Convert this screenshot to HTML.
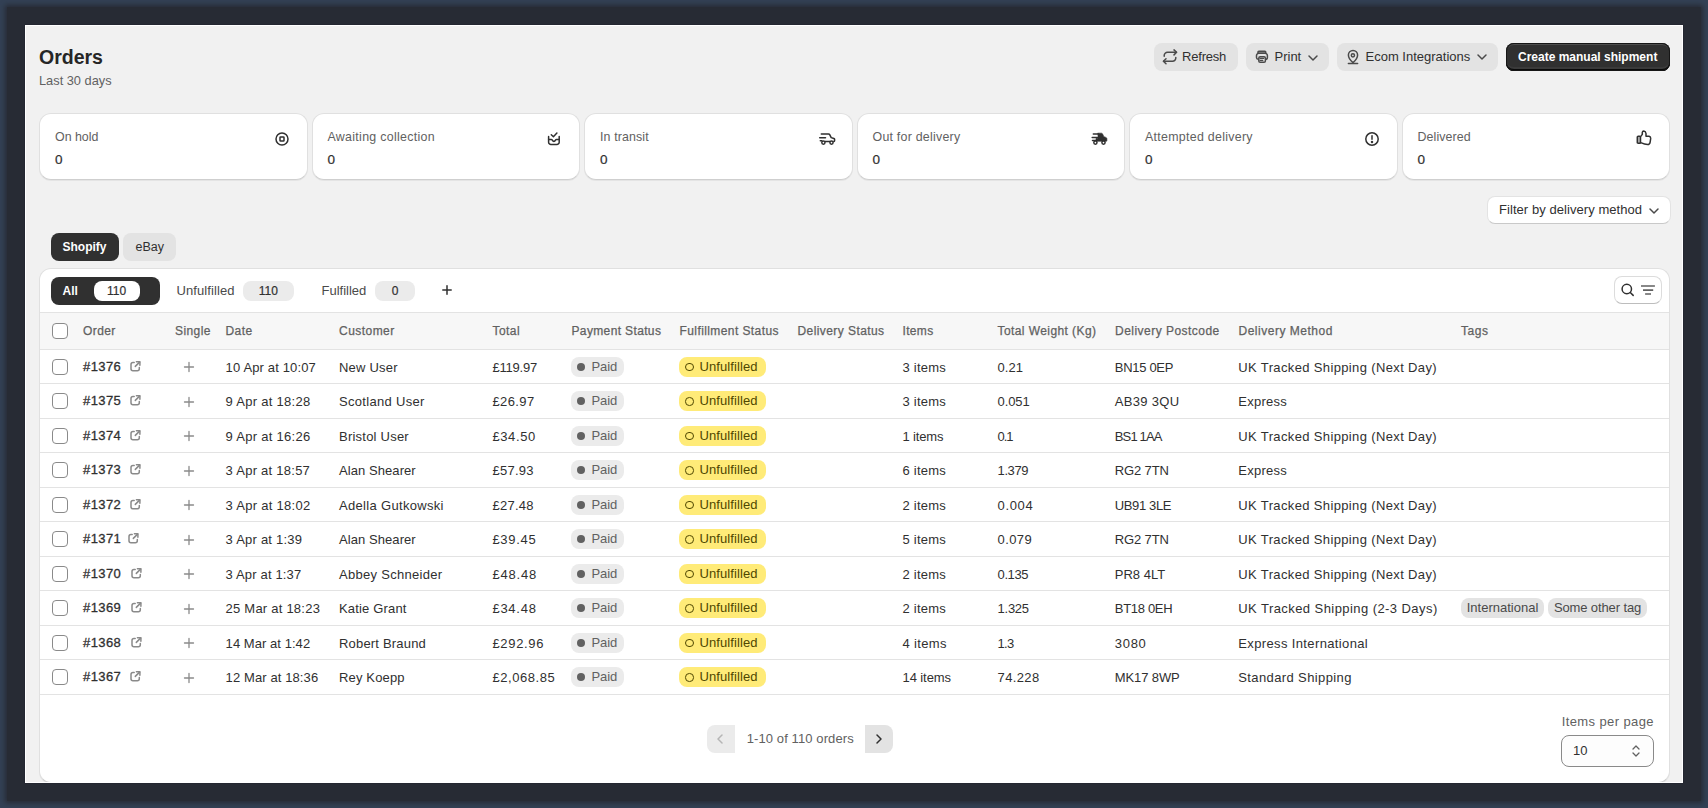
<!DOCTYPE html>
<html><head><meta charset="utf-8">
<style>
*{box-sizing:border-box;margin:0;padding:0}
html,body{width:1708px;height:808px;overflow:hidden}
body{background:#334155;font-family:"Liberation Sans",sans-serif;color:#303030;position:relative}
.frame{position:absolute;left:7px;top:7px;right:7px;bottom:7px;background:#272b34;box-shadow:0 0 5px 2px #272b34}
.panel{position:absolute;left:25px;top:25px;width:1658px;height:758px;background:#f1f1f1;border:1px solid #fff;overflow:hidden;box-shadow:0 0 1px 0 #1a1d24}
.abs{position:absolute;white-space:nowrap}
svg{display:block;overflow:visible}
.title{left:13px;top:19px;font-size:19.5px;font-weight:bold;color:#262626;line-height:24px}
.sub{left:13px;top:47px;font-size:12.8px;color:#616161;line-height:16px}
.btn{position:absolute;top:17px;height:28px;border-radius:8px;background:#e3e3e3;font-size:13px;color:#303030;white-space:nowrap}
.btn .t{position:absolute;top:7px;line-height:14px}
.btn svg{position:absolute}
.primary{background:#303030;color:#fff;font-weight:bold;font-size:12px;box-shadow:inset 0 0 0 1px #161616,inset 0 -2px 0 0 #0a0a0a,inset 0 2px 0 0 #4d4d4d,inset 0 -4px 0 0 #3a3a3a}
.card{position:absolute;background:#fff;border-radius:12px;border:1px solid #e0e0e0;border-bottom-color:#cfcfcf;box-shadow:0 1px 0 0 rgba(0,0,0,.05)}
.stat{top:87px;height:67px;width:268.5px}
.stat .lbl{position:absolute;left:15px;top:15px;font-size:12.4px;color:#616161;line-height:16px;white-space:nowrap}
.stat .val{position:absolute;left:15px;top:37.5px;font-size:13.5px;color:#303030;line-height:16px;letter-spacing:.3px;-webkit-text-stroke:.2px #303030}
.stat svg{position:absolute}
.tab{position:absolute;top:207px;height:28px;border-radius:8px;font-size:12px;line-height:14px}
.tab .t{position:absolute;top:7px}
.tcard{left:13px;top:242px;width:1631px;height:515px;border-radius:12px}
.pill{position:absolute;border-radius:8px}
.cnt{position:absolute;height:20px;border-radius:8px;background:#ebebeb;font-size:12px;line-height:20px;text-align:center;color:#303030;-webkit-text-stroke:.2px #303030}
.hdr{position:absolute;left:0;top:43px;width:1629px;height:38px;background:#f7f7f7;border-top:1px solid #e3e3e3;border-bottom:1px solid #e3e3e3}
.hdr .h{position:absolute;top:11px;font-size:12px;line-height:14px;color:#616161;letter-spacing:.42px;-webkit-text-stroke:.25px #616161;white-space:nowrap}
.line{position:absolute;left:0;width:1629px;height:1px;background:#e3e3e3}
.row{position:absolute;left:0;width:1629px;height:34px}
.c{position:absolute;font-size:13px;line-height:15px;color:#303030;letter-spacing:.3px;white-space:nowrap}
.num{letter-spacing:.15px}
.ord{font-weight:normal;letter-spacing:.42px;-webkit-text-stroke:.3px #303030}
.cb{position:absolute;left:13px;width:16px;height:16px;border:1px solid #8a8a8a;border-radius:4px;background:#fff}
.badge{position:absolute;height:20px;border-radius:8px;font-size:13px;line-height:20px;white-space:nowrap}
.paid{left:532px;width:53px;background:#ebebeb;color:#616161}
.paid i{position:absolute;left:6px;top:6px;width:8px;height:8px;border-radius:50%;background:#616161}
.paid span{position:absolute;left:20.5px;letter-spacing:-.1px}
.unf{left:640px;width:87px;background:#ffeb78;color:#4f4700}
.unf i{position:absolute;left:6px;top:6px;width:8.5px;height:8.5px;border-radius:50%;border:1.5px solid #4f4700}
.unf span{position:absolute;left:20.5px;letter-spacing:.1px}
.tag{position:absolute;height:20px;border-radius:8px;background:#e3e3e3;font-size:13px;line-height:20px;color:#4a4a4a;text-align:center;white-space:nowrap}
</style></head>
<body>
<div class="frame"></div>
<div class="panel">
  <div class="abs title">Orders</div>
  <div class="abs sub">Last 30 days</div>

  <div class="btn" style="left:1128px;width:84px">
    <svg style="left:8px;top:6px" width="16" height="16" viewBox="0 0 16 16" fill="none" stroke="#4a4a4a" stroke-width="1.5" stroke-linecap="round" stroke-linejoin="round">
      <path d="M12 0.9L14.6 3.3L12 5.9"/><path d="M14.4 3.3H5.6A3.3 3.3 0 0 0 2.2 6.6V7.3"/><path d="M4 9.8L1.4 12.3L4 14.8"/><path d="M1.6 12.3H10.4A3.3 3.3 0 0 0 13.8 9V8.5"/>
    </svg>
    <span class="t" style="left:28px;letter-spacing:-.2px">Refresh</span>
  </div>
  <div class="btn" style="left:1220px;width:83px">
    <svg style="left:4px;top:2px" width="24" height="24" viewBox="0 0 24 24" fill="none" stroke="#4a4a4a" stroke-width="1.5" stroke-linejoin="round" stroke-linecap="round"><rect x="7.9" y="6.2" width="7.9" height="2" rx="1"/><path d="M8.3 14.3H8.2A1.8 1.8 0 0 1 6.5 12.5V10.5A2.2 2.2 0 0 1 8.7 8.3H15.2A2.2 2.2 0 0 1 17.4 10.5V12.5A1.8 1.8 0 0 1 15.6 14.3H15.4"/><rect x="8.8" y="11.8" width="6.6" height="5.5" rx="1.4" fill="#e3e3e3"/><path d="M10.1 13.4H13.7M10 15.3H12.8" stroke-width="1.2"/></svg>
    <span class="t" style="left:28.5px">Print</span>
    <svg style="left:62px;top:11.5px" width="10" height="6" viewBox="0 0 10 6" fill="none" stroke="#4a4a4a" stroke-width="1.5" stroke-linecap="round" stroke-linejoin="round"><path d="M1 1l4 4 4-4"/></svg>
  </div>
  <div class="btn" style="left:1311px;width:161px">
    <svg style="left:4px;top:2px" width="24" height="24" viewBox="0 0 24 24" fill="none" stroke="#4a4a4a" stroke-width="1.5" stroke-linejoin="round" stroke-linecap="round"><path d="M12 17.6C12 17.6 7.4 13.8 7.4 10.1A4.6 4.6 0 0 1 16.6 10.1C16.6 13.8 12 17.6 12 17.6Z"/><circle cx="11.9" cy="10.3" r="1.6"/><path d="M7.4 18.6H16.6"/></svg>
    <span class="t" style="left:28.5px">Ecom Integrations</span>
    <svg style="left:140px;top:11px" width="10" height="6" viewBox="0 0 10 6" fill="none" stroke="#4a4a4a" stroke-width="1.5" stroke-linecap="round" stroke-linejoin="round"><path d="M1 1l4 4 4-4"/></svg>
  </div>
  <div class="btn primary" style="left:1480px;width:164px">
    <span class="t" style="left:12px;top:6.5px">Create manual shipment</span>
  </div>

  <div class="card stat" style="left:13px"><div class="lbl" style="letter-spacing:0px">On hold</div><div class="val">0</div>
    <svg style="left:235px;top:18px" width="14" height="14" viewBox="0 0 14 14" fill="none" stroke="#303030" stroke-width="1.5"><circle cx="7" cy="7" r="6"/><rect x="5" y="5" width="4" height="4" rx=".6"/></svg></div>
  <div class="card stat" style="left:285.5px"><div class="lbl" style="letter-spacing:0.3px">Awaiting collection</div><div class="val">0</div>
    <svg style="left:231.5px;top:15px" width="20" height="20" viewBox="0 0 20 20" fill="none" stroke="#303030" stroke-width="1.5" stroke-linejoin="round" stroke-linecap="round"><path d="M4.6 7.4V13.2A2.3 2.3 0 0 0 6.9 15.5H12.9A2.3 2.3 0 0 0 15.2 13.2V7.4"/><path d="M4.6 10.4H7.2Q7.9 10.4 8.3 11.2Q8.9 12.4 9.9 12.4Q10.9 12.4 11.5 11.2Q11.9 10.4 12.6 10.4H15.2"/><path d="M7.3 5.7L9.4 7.7L12.9 4.1"/></svg></div>
  <div class="card stat" style="left:558px"><div class="lbl" style="letter-spacing:0.13px">In transit</div><div class="val">0</div>
    <svg style="left:230px;top:14px" width="25" height="20" viewBox="0 0 25 20" fill="none" stroke="#303030" stroke-width="1.5" stroke-linecap="round" stroke-linejoin="round"><path d="M6.3 5.9H13.5a1.3 1.3 0 0 1 1.2.8L16.2 9.6L18.9 10.5a1 1 0 0 1 .7.9V12.4a1 1 0 0 1-.8 1"/><path d="M4.7 9.65H10.5"/><path d="M5.3 12.7H6.8"/><path d="M10.2 13.4H14.7"/><circle cx="8.4" cy="14.6" r="1.6" fill="#fff"/><circle cx="16.5" cy="14.6" r="1.6" fill="#fff"/></svg></div>
  <div class="card stat" style="left:830.5px"><div class="lbl" style="letter-spacing:0.24px">Out for delivery</div><div class="val">0</div>
    <svg style="left:230.5px;top:14px" width="25" height="20" viewBox="0 0 25 20" fill="none" stroke="#303030" stroke-width="1.5" stroke-linecap="round" stroke-linejoin="round"><path d="M10 5.15H13.4Q14.1 5.15 14.5 5.8L15.9 8.7L17.9 9.4Q18.9 9.8 18.9 10.8V12.6Q18.9 13.3 18.3 13.3H8V10.35H10Z" fill="#303030" stroke-width=".6"/><path d="M5.3 5.9H10.5"/><path d="M4.2 9.6H10"/><path d="M4.5 12.4H8"/><circle cx="7.4" cy="14.6" r="1.6" fill="#fff"/><circle cx="15.5" cy="14.6" r="1.6" fill="#fff"/></svg></div>
  <div class="card stat" style="left:1103px"><div class="lbl" style="letter-spacing:0.29px">Attempted delivery</div><div class="val">0</div>
    <svg style="left:235px;top:18px" width="14" height="14" viewBox="0 0 14 14" fill="none" stroke="#303030" stroke-width="1.5" stroke-linecap="round"><circle cx="7" cy="7" r="6.2"/><path d="M7 3.8v3.4"/><circle cx="7" cy="10" r=".5" fill="#303030"/></svg></div>
  <div class="card stat" style="left:1375.5px"><div class="lbl" style="letter-spacing:0.1px">Delivered</div><div class="val">0</div>
    <svg style="left:233.5px;top:16px" width="17" height="17" viewBox="0 0 17 17" fill="none" stroke="#303030" stroke-width="1.5" stroke-linejoin="round" stroke-linecap="round"><rect x="1.3" y="6.2" width="3.2" height="7.1" rx=".9" fill="#b0b0b0"/><path d="M4.6 6.6L6.3 4.4V2.4Q6.5 1.1 7.8 1.1Q9.7 1.3 10 3.5V6.3H13.1Q14.8 6.6 14.7 8.4L14.1 12.3Q13.7 14.5 11.6 14.5Q9 14.4 4.6 12.6"/></svg></div>

  <div class="abs" style="left:1461px;top:170px;width:183.5px;height:28px;background:#fff;border-radius:8px;border:1px solid #e3e3e3;border-bottom-color:#c9c9c9;">
    <span class="abs" style="left:11px;top:6px;font-size:13px;line-height:14px;color:#303030;letter-spacing:.06px">Filter by delivery method</span>
    <svg class="abs" style="left:161.3px;top:10.5px" width="10" height="6" viewBox="0 0 10 6" fill="none" stroke="#4a4a4a" stroke-width="1.5" stroke-linecap="round" stroke-linejoin="round"><path d="M1 1l4 4 4-4"/></svg>
  </div>

  <div class="tab" style="left:25px;width:68px;background:#303030;color:#fff;font-weight:bold"><span class="t" style="left:11.5px">Shopify</span></div>
  <div class="tab" style="left:97px;width:53px;background:#e3e3e3;color:#303030;font-size:12.5px"><span class="t" style="left:12.5px">eBay</span></div>

  <div class="card tcard">
    <div class="pill" style="left:11px;top:8px;width:109px;height:28px;background:#303030">
      <span class="abs" style="left:11.5px;top:7px;font-size:12px;line-height:14px;color:#fff;font-weight:bold">All</span>
      <div class="cnt" style="left:42.5px;top:3.5px;width:46px;background:#fff">110</div>
    </div>
    <span class="abs" style="left:136.5px;top:15px;font-size:13px;line-height:14px;color:#4a4a4a;letter-spacing:.1px">Unfulfilled</span>
    <div class="cnt" style="left:203px;top:11.5px;width:50.5px">110</div>
    <span class="abs" style="left:281.5px;top:15px;font-size:13px;line-height:14px;color:#4a4a4a">Fulfilled</span>
    <div class="cnt" style="left:335px;top:11.5px;width:40px">0</div>
    <svg class="abs" style="left:402px;top:16px" width="10" height="10" viewBox="0 0 10 10" fill="none" stroke="#303030" stroke-width="1.5" stroke-linecap="round"><path d="M5 0.8v8.4M0.8 5h8.4"/></svg>
    <div class="abs" style="left:1574px;top:7px;width:48px;height:28px;border-radius:8px;border:1px solid #dcdcdc;border-bottom-color:#bdbdbd;background:#fff">
      <svg class="abs" style="left:6px;top:6px" width="14" height="14" viewBox="0 0 14 14" fill="none" stroke="#303030" stroke-width="1.5" stroke-linecap="round"><circle cx="5.8" cy="6" r="4.7"/><path d="M9.3 9.5l2.9 2.9"/></svg>
      <svg class="abs" style="left:25px;top:8px" width="15" height="10" viewBox="0 0 15 10" fill="none" stroke="#616161" stroke-width="1.6"><path d="M1 1h13.9M3 5.1h10.2M5.1 9h5.9"/></svg>
    </div>

    <div class="hdr">
      <div class="cb" style="top:10px;left:12px"></div>
      <span class="h" style="left:43px">Order</span>
      <span class="h" style="left:135px">Single</span>
      <span class="h" style="left:185.5px">Date</span>
      <span class="h" style="left:299px;letter-spacing:0.46px">Customer</span>
      <span class="h" style="left:452.5px;letter-spacing:0.43px">Total</span>
      <span class="h" style="left:531.5px;letter-spacing:0.36px">Payment Status</span>
      <span class="h" style="left:639.5px;letter-spacing:0.41px">Fulfillment Status</span>
      <span class="h" style="left:757.5px;letter-spacing:0.42px">Delivery Status</span>
      <span class="h" style="left:862.5px;letter-spacing:0.33px">Items</span>
      <span class="h" style="left:957.5px;letter-spacing:0.42px">Total Weight (Kg)</span>
      <span class="h" style="left:1075px;letter-spacing:0.47px">Delivery Postcode</span>
      <span class="h" style="left:1198.5px;letter-spacing:0.51px">Delivery Method</span>
      <span class="h" style="left:1421px;letter-spacing:0.54px">Tags</span>
    </div>
    <div class="cb" style="top:89.9px;left:12px"></div><span class="c ord" style="left:43px;top:89.9px">#1376</span><svg style="position:absolute;left:84.0px;top:86.9px" width="24" height="22" viewBox="0 0 24 22" fill="none" stroke="#8a8a8a" stroke-width="1.5" stroke-linecap="round" stroke-linejoin="round"><path d="M10.2 6.5H9a2 2 0 0 0-2 2V12.8a2 2 0 0 0 2 2H13.3a2 2 0 0 0 2-2V11.5"/><path d="M12.4 5.8H15.9V9.3"/><path d="M15.6 6.1L11.3 10.4"/></svg><svg style="position:absolute;left:144px;top:93.2px" width="10" height="10" viewBox="0 0 10 10" fill="none" stroke="#8a8a8a" stroke-width="1.3" stroke-linecap="round"><path d="M5 0.5v9M0.5 5h9"/></svg><span class="c" style="left:185.6px;top:90.9px;letter-spacing:0.143px">10 Apr at 10:07</span><span class="c" style="left:299px;top:90.9px;letter-spacing:0.214px">New User</span><span class="c num" style="left:452.4px;top:90.9px;letter-spacing:-0.2px">£119.97</span><div class="badge paid" style="left:531px;top:87.9px"><i></i><span>Paid</span></div><div class="badge unf" style="left:639px;top:87.9px"><i></i><span>Unfulfilled</span></div><span class="c" style="left:862.5px;top:90.9px;letter-spacing:0.217px">3 items</span><span class="c num" style="left:957.6px;top:90.9px;letter-spacing:0.0px">0.21</span><span class="c num" style="left:1074.8px;top:90.9px;letter-spacing:-0.3px">BN15 0EP</span><span class="c" style="left:1198.3px;top:90.9px;letter-spacing:0.362px">UK Tracked Shipping (Next Day)</span>
<div class="cb" style="top:124.4px;left:12px"></div><span class="c ord" style="left:43px;top:124.4px">#1375</span><svg style="position:absolute;left:84.0px;top:121.4px" width="24" height="22" viewBox="0 0 24 22" fill="none" stroke="#8a8a8a" stroke-width="1.5" stroke-linecap="round" stroke-linejoin="round"><path d="M10.2 6.5H9a2 2 0 0 0-2 2V12.8a2 2 0 0 0 2 2H13.3a2 2 0 0 0 2-2V11.5"/><path d="M12.4 5.8H15.9V9.3"/><path d="M15.6 6.1L11.3 10.4"/></svg><svg style="position:absolute;left:144px;top:127.7px" width="10" height="10" viewBox="0 0 10 10" fill="none" stroke="#8a8a8a" stroke-width="1.3" stroke-linecap="round"><path d="M5 0.5v9M0.5 5h9"/></svg><span class="c" style="left:185.6px;top:125.4px;letter-spacing:0.285px">9 Apr at 18:28</span><span class="c" style="left:299px;top:125.4px;letter-spacing:0.317px">Scotland User</span><span class="c num" style="left:452.4px;top:125.4px;letter-spacing:0.42px">£26.97</span><div class="badge paid" style="left:531px;top:122.4px"><i></i><span>Paid</span></div><div class="badge unf" style="left:639px;top:122.4px"><i></i><span>Unfulfilled</span></div><span class="c" style="left:862.5px;top:125.4px;letter-spacing:0.217px">3 items</span><span class="c num" style="left:957.6px;top:125.4px;letter-spacing:-0.1px">0.051</span><span class="c num" style="left:1074.8px;top:125.4px;letter-spacing:0.3px">AB39 3QU</span><span class="c" style="left:1198.3px;top:125.4px;letter-spacing:0.25px">Express</span>
<div class="cb" style="top:158.9px;left:12px"></div><span class="c ord" style="left:43px;top:158.9px">#1374</span><svg style="position:absolute;left:84.0px;top:155.9px" width="24" height="22" viewBox="0 0 24 22" fill="none" stroke="#8a8a8a" stroke-width="1.5" stroke-linecap="round" stroke-linejoin="round"><path d="M10.2 6.5H9a2 2 0 0 0-2 2V12.8a2 2 0 0 0 2 2H13.3a2 2 0 0 0 2-2V11.5"/><path d="M12.4 5.8H15.9V9.3"/><path d="M15.6 6.1L11.3 10.4"/></svg><svg style="position:absolute;left:144px;top:162.2px" width="10" height="10" viewBox="0 0 10 10" fill="none" stroke="#8a8a8a" stroke-width="1.3" stroke-linecap="round"><path d="M5 0.5v9M0.5 5h9"/></svg><span class="c" style="left:185.6px;top:159.9px;letter-spacing:0.285px">9 Apr at 16:26</span><span class="c" style="left:299px;top:159.9px;letter-spacing:0.227px">Bristol User</span><span class="c num" style="left:452.4px;top:159.9px;letter-spacing:0.62px">£34.50</span><div class="badge paid" style="left:531px;top:156.9px"><i></i><span>Paid</span></div><div class="badge unf" style="left:639px;top:156.9px"><i></i><span>Unfulfilled</span></div><span class="c" style="left:862.5px;top:159.9px;letter-spacing:-0.167px">1 items</span><span class="c num" style="left:957.6px;top:159.9px;letter-spacing:-1.15px">0.1</span><span class="c num" style="left:1074.8px;top:159.9px;letter-spacing:-0.85px">BS1 1AA</span><span class="c" style="left:1198.3px;top:159.9px;letter-spacing:0.362px">UK Tracked Shipping (Next Day)</span>
<div class="cb" style="top:193.4px;left:12px"></div><span class="c ord" style="left:43px;top:193.4px">#1373</span><svg style="position:absolute;left:84.0px;top:190.4px" width="24" height="22" viewBox="0 0 24 22" fill="none" stroke="#8a8a8a" stroke-width="1.5" stroke-linecap="round" stroke-linejoin="round"><path d="M10.2 6.5H9a2 2 0 0 0-2 2V12.8a2 2 0 0 0 2 2H13.3a2 2 0 0 0 2-2V11.5"/><path d="M12.4 5.8H15.9V9.3"/><path d="M15.6 6.1L11.3 10.4"/></svg><svg style="position:absolute;left:144px;top:196.7px" width="10" height="10" viewBox="0 0 10 10" fill="none" stroke="#8a8a8a" stroke-width="1.3" stroke-linecap="round"><path d="M5 0.5v9M0.5 5h9"/></svg><span class="c" style="left:185.6px;top:194.4px;letter-spacing:0.254px">3 Apr at 18:57</span><span class="c" style="left:299px;top:194.4px;letter-spacing:0.073px">Alan Shearer</span><span class="c num" style="left:452.4px;top:194.4px;letter-spacing:0.28px">£57.93</span><div class="badge paid" style="left:531px;top:191.4px"><i></i><span>Paid</span></div><div class="badge unf" style="left:639px;top:191.4px"><i></i><span>Unfulfilled</span></div><span class="c" style="left:862.5px;top:194.4px;letter-spacing:0.217px">6 items</span><span class="c num" style="left:957.6px;top:194.4px;letter-spacing:-0.425px">1.379</span><span class="c num" style="left:1074.8px;top:194.4px;letter-spacing:-0.133px">RG2 7TN</span><span class="c" style="left:1198.3px;top:194.4px;letter-spacing:0.25px">Express</span>
<div class="cb" style="top:227.9px;left:12px"></div><span class="c ord" style="left:43px;top:227.9px">#1372</span><svg style="position:absolute;left:84.0px;top:224.9px" width="24" height="22" viewBox="0 0 24 22" fill="none" stroke="#8a8a8a" stroke-width="1.5" stroke-linecap="round" stroke-linejoin="round"><path d="M10.2 6.5H9a2 2 0 0 0-2 2V12.8a2 2 0 0 0 2 2H13.3a2 2 0 0 0 2-2V11.5"/><path d="M12.4 5.8H15.9V9.3"/><path d="M15.6 6.1L11.3 10.4"/></svg><svg style="position:absolute;left:144px;top:231.2px" width="10" height="10" viewBox="0 0 10 10" fill="none" stroke="#8a8a8a" stroke-width="1.3" stroke-linecap="round"><path d="M5 0.5v9M0.5 5h9"/></svg><span class="c" style="left:185.6px;top:228.9px;letter-spacing:0.285px">3 Apr at 18:02</span><span class="c" style="left:299px;top:228.9px;letter-spacing:0.32px">Adella Gutkowski</span><span class="c num" style="left:452.4px;top:228.9px;letter-spacing:0.28px">£27.48</span><div class="badge paid" style="left:531px;top:225.9px"><i></i><span>Paid</span></div><div class="badge unf" style="left:639px;top:225.9px"><i></i><span>Unfulfilled</span></div><span class="c" style="left:862.5px;top:228.9px;letter-spacing:0.217px">2 items</span><span class="c num" style="left:957.6px;top:228.9px;letter-spacing:0.625px">0.004</span><span class="c num" style="left:1074.8px;top:228.9px;letter-spacing:-0.371px">UB91 3LE</span><span class="c" style="left:1198.3px;top:228.9px;letter-spacing:0.362px">UK Tracked Shipping (Next Day)</span>
<div class="cb" style="top:262.4px;left:12px"></div><span class="c ord" style="left:43px;top:262.4px">#1371</span><svg style="position:absolute;left:81.9px;top:259.4px" width="24" height="22" viewBox="0 0 24 22" fill="none" stroke="#8a8a8a" stroke-width="1.5" stroke-linecap="round" stroke-linejoin="round"><path d="M10.2 6.5H9a2 2 0 0 0-2 2V12.8a2 2 0 0 0 2 2H13.3a2 2 0 0 0 2-2V11.5"/><path d="M12.4 5.8H15.9V9.3"/><path d="M15.6 6.1L11.3 10.4"/></svg><svg style="position:absolute;left:144px;top:265.7px" width="10" height="10" viewBox="0 0 10 10" fill="none" stroke="#8a8a8a" stroke-width="1.3" stroke-linecap="round"><path d="M5 0.5v9M0.5 5h9"/></svg><span class="c" style="left:185.6px;top:263.4px;letter-spacing:0.225px">3 Apr at 1:39</span><span class="c" style="left:299px;top:263.4px;letter-spacing:0.073px">Alan Shearer</span><span class="c num" style="left:452.4px;top:263.4px;letter-spacing:0.72px">£39.45</span><div class="badge paid" style="left:531px;top:260.4px"><i></i><span>Paid</span></div><div class="badge unf" style="left:639px;top:260.4px"><i></i><span>Unfulfilled</span></div><span class="c" style="left:862.5px;top:263.4px;letter-spacing:0.217px">5 items</span><span class="c num" style="left:957.6px;top:263.4px;letter-spacing:0.375px">0.079</span><span class="c num" style="left:1074.8px;top:263.4px;letter-spacing:-0.133px">RG2 7TN</span><span class="c" style="left:1198.3px;top:263.4px;letter-spacing:0.362px">UK Tracked Shipping (Next Day)</span>
<div class="cb" style="top:296.9px;left:12px"></div><span class="c ord" style="left:43px;top:296.9px">#1370</span><svg style="position:absolute;left:84.7px;top:293.9px" width="24" height="22" viewBox="0 0 24 22" fill="none" stroke="#8a8a8a" stroke-width="1.5" stroke-linecap="round" stroke-linejoin="round"><path d="M10.2 6.5H9a2 2 0 0 0-2 2V12.8a2 2 0 0 0 2 2H13.3a2 2 0 0 0 2-2V11.5"/><path d="M12.4 5.8H15.9V9.3"/><path d="M15.6 6.1L11.3 10.4"/></svg><svg style="position:absolute;left:144px;top:300.2px" width="10" height="10" viewBox="0 0 10 10" fill="none" stroke="#8a8a8a" stroke-width="1.3" stroke-linecap="round"><path d="M5 0.5v9M0.5 5h9"/></svg><span class="c" style="left:185.6px;top:297.9px;letter-spacing:0.158px">3 Apr at 1:37</span><span class="c" style="left:299px;top:297.9px;letter-spacing:0.293px">Abbey Schneider</span><span class="c num" style="left:452.4px;top:297.9px;letter-spacing:0.84px">£48.48</span><div class="badge paid" style="left:531px;top:294.9px"><i></i><span>Paid</span></div><div class="badge unf" style="left:639px;top:294.9px"><i></i><span>Unfulfilled</span></div><span class="c" style="left:862.5px;top:297.9px;letter-spacing:0.217px">2 items</span><span class="c num" style="left:957.6px;top:297.9px;letter-spacing:-0.425px">0.135</span><span class="c num" style="left:1074.8px;top:297.9px;letter-spacing:0.0px">PR8 4LT</span><span class="c" style="left:1198.3px;top:297.9px;letter-spacing:0.362px">UK Tracked Shipping (Next Day)</span>
<div class="cb" style="top:331.4px;left:12px"></div><span class="c ord" style="left:43px;top:331.4px">#1369</span><svg style="position:absolute;left:84.7px;top:328.4px" width="24" height="22" viewBox="0 0 24 22" fill="none" stroke="#8a8a8a" stroke-width="1.5" stroke-linecap="round" stroke-linejoin="round"><path d="M10.2 6.5H9a2 2 0 0 0-2 2V12.8a2 2 0 0 0 2 2H13.3a2 2 0 0 0 2-2V11.5"/><path d="M12.4 5.8H15.9V9.3"/><path d="M15.6 6.1L11.3 10.4"/></svg><svg style="position:absolute;left:144px;top:334.7px" width="10" height="10" viewBox="0 0 10 10" fill="none" stroke="#8a8a8a" stroke-width="1.3" stroke-linecap="round"><path d="M5 0.5v9M0.5 5h9"/></svg><span class="c" style="left:185.6px;top:332.4px;letter-spacing:0.229px">25 Mar at 18:23</span><span class="c" style="left:299px;top:332.4px;letter-spacing:0.17px">Katie Grant</span><span class="c num" style="left:452.4px;top:332.4px;letter-spacing:0.76px">£34.48</span><div class="badge paid" style="left:531px;top:329.4px"><i></i><span>Paid</span></div><div class="badge unf" style="left:639px;top:329.4px"><i></i><span>Unfulfilled</span></div><span class="c" style="left:862.5px;top:332.4px;letter-spacing:0.217px">2 items</span><span class="c num" style="left:957.6px;top:332.4px;letter-spacing:-0.275px">1.325</span><span class="c num" style="left:1074.8px;top:332.4px;letter-spacing:-0.314px">BT18 0EH</span><span class="c" style="left:1198.3px;top:332.4px;letter-spacing:0.431px">UK Tracked Shipping (2-3 Days)</span><span class="tag" style="left:1421px;top:329.4px;width:83px">International</span><span class="tag" style="left:1508px;top:329.4px;width:99px;letter-spacing:-.12px">Some other tag</span>
<div class="cb" style="top:365.9px;left:12px"></div><span class="c ord" style="left:43px;top:365.9px">#1368</span><svg style="position:absolute;left:84.7px;top:362.9px" width="24" height="22" viewBox="0 0 24 22" fill="none" stroke="#8a8a8a" stroke-width="1.5" stroke-linecap="round" stroke-linejoin="round"><path d="M10.2 6.5H9a2 2 0 0 0-2 2V12.8a2 2 0 0 0 2 2H13.3a2 2 0 0 0 2-2V11.5"/><path d="M12.4 5.8H15.9V9.3"/><path d="M15.6 6.1L11.3 10.4"/></svg><svg style="position:absolute;left:144px;top:369.2px" width="10" height="10" viewBox="0 0 10 10" fill="none" stroke="#8a8a8a" stroke-width="1.3" stroke-linecap="round"><path d="M5 0.5v9M0.5 5h9"/></svg><span class="c" style="left:185.6px;top:366.9px;letter-spacing:0.054px">14 Mar at 1:42</span><span class="c" style="left:299px;top:366.9px;letter-spacing:0.192px">Robert Braund</span><span class="c num" style="left:452.4px;top:366.9px;letter-spacing:0.683px">£292.96</span><div class="badge paid" style="left:531px;top:363.9px"><i></i><span>Paid</span></div><div class="badge unf" style="left:639px;top:363.9px"><i></i><span>Unfulfilled</span></div><span class="c" style="left:862.5px;top:366.9px;letter-spacing:0.333px">4 items</span><span class="c num" style="left:957.6px;top:366.9px;letter-spacing:-0.7px">1.3</span><span class="c num" style="left:1074.8px;top:366.9px;letter-spacing:0.7px">3080</span><span class="c" style="left:1198.3px;top:366.9px;letter-spacing:0.365px">Express International</span>
<div class="cb" style="top:400.4px;left:12px"></div><span class="c ord" style="left:43px;top:400.4px">#1367</span><svg style="position:absolute;left:84.0px;top:397.4px" width="24" height="22" viewBox="0 0 24 22" fill="none" stroke="#8a8a8a" stroke-width="1.5" stroke-linecap="round" stroke-linejoin="round"><path d="M10.2 6.5H9a2 2 0 0 0-2 2V12.8a2 2 0 0 0 2 2H13.3a2 2 0 0 0 2-2V11.5"/><path d="M12.4 5.8H15.9V9.3"/><path d="M15.6 6.1L11.3 10.4"/></svg><svg style="position:absolute;left:144px;top:403.7px" width="10" height="10" viewBox="0 0 10 10" fill="none" stroke="#8a8a8a" stroke-width="1.3" stroke-linecap="round"><path d="M5 0.5v9M0.5 5h9"/></svg><span class="c" style="left:185.6px;top:401.4px;letter-spacing:0.107px">12 Mar at 18:36</span><span class="c" style="left:299px;top:401.4px;letter-spacing:0.15px">Rey Koepp</span><span class="c num" style="left:452.4px;top:401.4px;letter-spacing:0.562px">£2,068.85</span><div class="badge paid" style="left:531px;top:398.4px"><i></i><span>Paid</span></div><div class="badge unf" style="left:639px;top:398.4px"><i></i><span>Unfulfilled</span></div><span class="c" style="left:862.5px;top:401.4px;letter-spacing:-0.086px">14 items</span><span class="c num" style="left:957.6px;top:401.4px;letter-spacing:0.36px">74.228</span><span class="c num" style="left:1074.8px;top:401.4px;letter-spacing:-0.114px">MK17 8WP</span><span class="c" style="left:1198.3px;top:401.4px;letter-spacing:0.381px">Standard Shipping</span>
<div class="line" style="top:114px"></div>
<div class="line" style="top:149px"></div>
<div class="line" style="top:183px"></div>
<div class="line" style="top:218px"></div>
<div class="line" style="top:252px"></div>
<div class="line" style="top:287px"></div>
<div class="line" style="top:321px"></div>
<div class="line" style="top:356px"></div>
<div class="line" style="top:390px"></div>
<div class="line" style="top:425px"></div>
<div class="abs" style="left:667px;top:456px;width:28px;height:28px;background:#ebebeb;border-radius:8px 0 0 8px"><svg class="abs" style="left:10px;top:9px" width="6" height="10" viewBox="0 0 6 10" fill="none" stroke="#b5b5b5" stroke-width="1.5" stroke-linecap="round" stroke-linejoin="round"><path d="M5 1L1 5l4 4"/></svg></div>
<span class="abs" style="left:706.7px;top:463px;font-size:13px;line-height:14px;color:#616161;letter-spacing:.1px">1-10 of 110 orders</span>
<div class="abs" style="left:825px;top:456px;width:28px;height:28px;background:#e3e3e3;border-radius:0 8px 8px 0"><svg class="abs" style="left:11px;top:9px" width="6" height="10" viewBox="0 0 6 10" fill="none" stroke="#303030" stroke-width="1.5" stroke-linecap="round" stroke-linejoin="round"><path d="M1 1l4 4-4 4"/></svg></div>
<span class="abs" style="left:1521.7px;top:446px;font-size:13px;line-height:14px;color:#616161;letter-spacing:.4px">Items per page</span>
<div class="abs" style="left:1521px;top:466px;width:93px;height:32px;border:1px solid #8a8a8a;border-radius:8px;background:#fdfdfd"><span class="abs" style="left:11px;top:8px;font-size:13px;line-height:14px;color:#303030">10</span><svg class="abs" style="left:69px;top:8px" width="10" height="14" viewBox="0 0 10 14" fill="none" stroke="#616161" stroke-width="1.3" stroke-linecap="round" stroke-linejoin="round"><path d="M2 5l3-3 3 3M2 9l3 3 3-3"/></svg></div>
  </div>
</div>
</body></html>
